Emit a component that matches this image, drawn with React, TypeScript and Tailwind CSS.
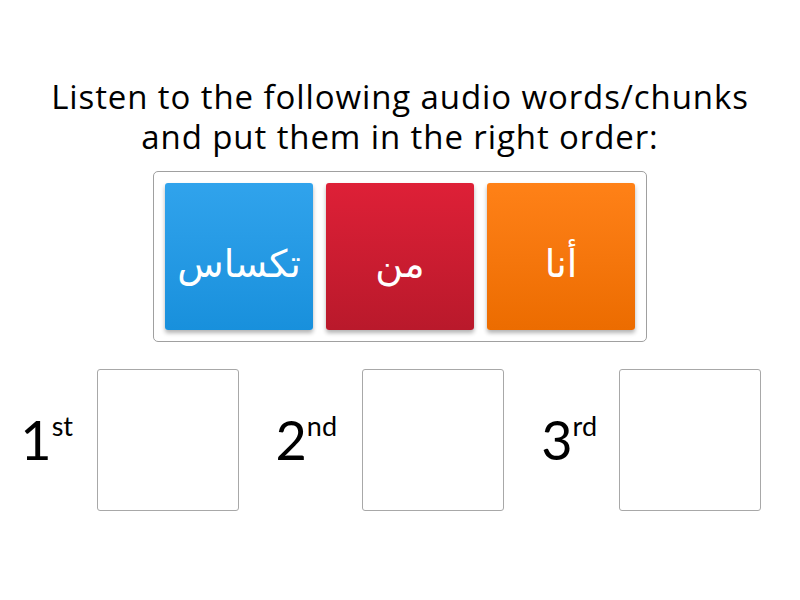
const tiles = [
  { word: "تكساس", cls: "bg-gradient-to-b from-[#30a3ec] to-[#1890dc]" },
  { word: "من", cls: "bg-gradient-to-b from-[#de2037] to-[#b9192b]" },
  { word: "أنا", cls: "bg-gradient-to-b from-[#ff8117] to-[#ec6c00]" },
];

const Tile = ({ word, cls }: { word: string; cls: string }) => (
  <div
    className={`flex h-[147px] w-[148px] items-center justify-center rounded-[3px] pt-[16px] text-[38px] text-white shadow-[0_3px_4px_rgba(0,0,0,0.3)] ${cls}`}
    style={{ fontFamily: '"DejaVu Sans", sans-serif' }}
    dir="rtl"
  >
    {word}
  </div>
);

const Slot = ({ num, suffix, width, pad }: { num: string; suffix: string; width: string; pad: string }) => (
  <>
    <div className={`flex justify-end ${width} ${pad}`}>
      <span className="text-[54px] leading-none">{num}</span>
      <span className="mt-[-1px] text-[27px] leading-none">{suffix}</span>
    </div>
    <div className="h-[142px] w-[142px] rounded-[3px] border border-[#a8a8a8] bg-white" />
  </>
);

export default function App() {
  return (
    <div className="min-h-[600px] w-[800px] bg-white text-black" style={{ fontFamily: 'Lato, "Open Sans", sans-serif' }}>
      <div
        className="pt-[77px] text-center text-[33px] leading-[40px] tracking-[0.9px]"
        style={{ fontFamily: '"Open Sans", sans-serif' }}
      >
        <div>Listen to the following audio words/chunks</div>
        <div>and put them in the right order:</div>
      </div>

      <div className="mt-[14px] flex justify-center">
        <div className="flex w-[494px] justify-between rounded-[5px] border border-[#a0a0a0] p-[11px]">
          {tiles.map((t) => (
            <Tile key={t.word} {...t} />
          ))}
        </div>
      </div>

      <div className="mt-[27px] flex items-center">
        <Slot num="1" suffix="st" width="w-[97px]" pad="pr-[24px]" />
        <Slot num="2" suffix="nd" width="w-[123px]" pad="pr-[25px]" />
        <Slot num="3" suffix="rd" width="w-[115px]" pad="pr-[22px]" />
      </div>
    </div>
  );
}
